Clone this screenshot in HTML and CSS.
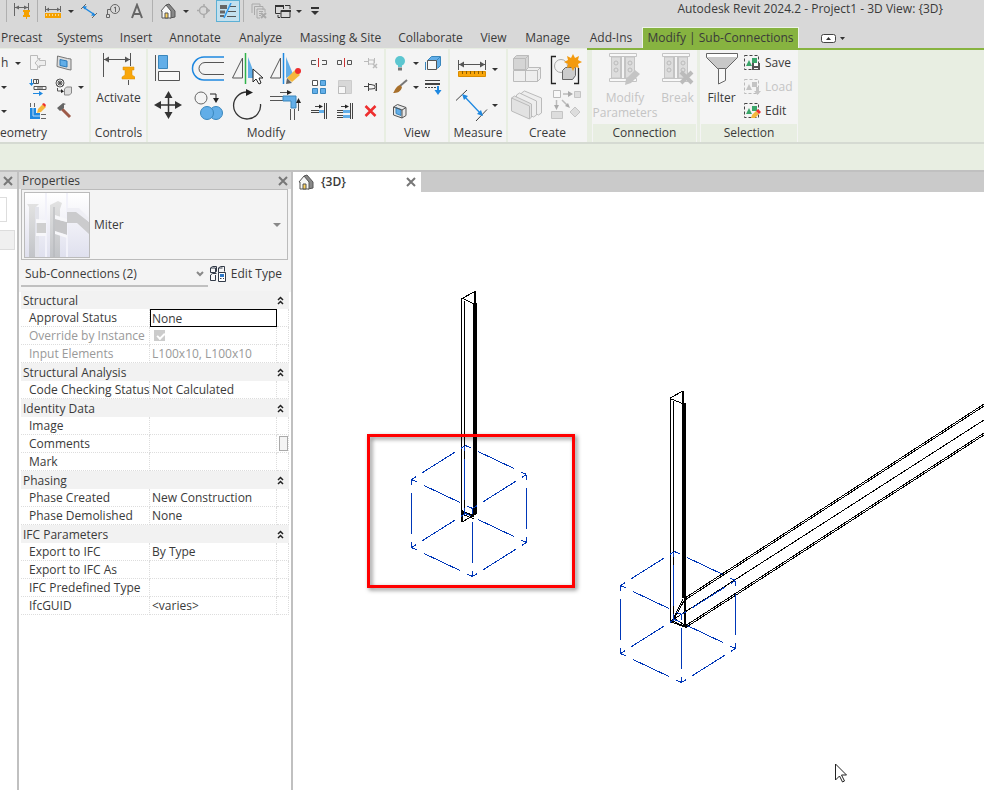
FILE: index.html
```html
<!doctype html>
<html lang="en-US">
    <head>
        <meta charset="utf-8"/>
        <title>Autodesk Revit 2024.2 - Project1 - 3D View: {3D}</title>
        <link rel="stylesheet" href="styles.css">
    </head>
    <body>
        <header>
            <div class="titlebar">
                <div class="quick">
                    <span class="sep"></span>
                    <button type="button" aria-label="Activate dimensions">
                        <svg width="16" height="18" viewBox="0 0 16 18"><path d="M.5 1v13M14.5 1v7M1 5.500h13" fill="none" stroke="#666"/><path d="M1 5.500l4-2v4zM14 5.500l-4-2v4z" fill="#666"/><path d="M9 8h7v2h-1v3h1v2H9v-2h1v-3H9zM12 15h1v2h-1z" fill="#f5a100"/></svg>
                    </button>
                    <span class="sep"></span>
                    <button type="button" aria-label="Measure">
                        <svg width="16" height="16" viewBox="0 0 16 16"><path d="M.5 3v6M15.500 3v6M1 6.500h14" fill="none" stroke="#666"/><path d="M1 6.500l3-2v4zM15 6.500l-3-2v4z" fill="#666"/><path d="M0 10h16v5H0z" fill="#f5a100"/><path d="M1.500 11v2M4.500 11v2M7.500 11v2M10.500 11v2M13.500 11v2" stroke="#fbd68c"/></svg>
                    </button>
                    <button type="button" class="drop" aria-label="Measure options"></button>
                    <button type="button" aria-label="Aligned dimension">
                        <svg width="16" height="16" viewBox="0 0 16 16"><path d="M2 4l12 8" stroke="#1e88e0" stroke-width="1.500"/><path d="M0 6l5-5M11 15l5-5" stroke="#666"/><path d="M2 3l4 .5-2.500 3zM14 13l-4-.5 2.500-3z" fill="#1e88e0"/></svg>
                    </button>
                    <button type="button" aria-label="Tag by category">
                        <svg width="16" height="16" viewBox="0 0 16 16"><circle cx="10" cy="6" r="4.500" fill="none" stroke="#666"/><path d="M9 5l1.500-1v5M6 6.500H2.500V11" fill="none" stroke="#666"/><path d="M1.500 11.500h3v3h-3z" fill="#ddd" stroke="#666"/></svg>
                    </button>
                    <button type="button" aria-label="Text">
                        <svg width="14" height="16" viewBox="0 0 14 16"><path d="M2 15L7 2l5 13M4 11h6" fill="none" stroke="#666" stroke-width="2"/></svg>
                    </button>
                    <span class="sep"></span>
                    <button type="button" aria-label="Default 3D view">
                        <svg width="16" height="16" viewBox="0 0 16 16"><path d="M6 2l3-1 6 7v6l-5 1z" fill="#888" stroke="#555"/><path d="M1 8l5-6 5 6v7H2V8z" fill="#f7f7f7" stroke="#555"/><path d="M5 10h3v5H5z" fill="#ffd35c" stroke="#555"/></svg>
                    </button>
                    <button type="button" class="drop" aria-label="3D view options"></button>
                    <button type="button" aria-label="Section">
                        <svg width="14" height="16" viewBox="0 0 14 16"><circle cx="6.500" cy="7.500" r="4" fill="none" stroke="#aaa" stroke-width="1.500"/><path d="M0 7.500h3M7 1v2M7 12v3M10 7.500h3" fill="none" stroke="#aaa" stroke-width="1.500"/><path d="M9 4l4 3.500L9 11z" fill="#aaa"/></svg>
                    </button>
                    <button type="button" class="on" aria-label="Thin lines">
                        <svg width="18" height="16" viewBox="0 0 18 16"><path d="M1 2h7v4H1zM1 7.500h5v3H1zM1 12h4v2H1z" fill="#666"/><path d="M11 3.500h6M9 8.500h8M8 13.500h9" stroke="#555"/><path d="M12 0L5 15" stroke="#2e9bf0" stroke-width="1.500"/></svg>
                    </button>
                    <span class="sep"></span>
                    <button type="button" aria-label="Close inactive views">
                        <svg width="17" height="16" viewBox="0 0 17 16"><path d="M1 10V1h8v3M3.500 12V3.500H12V7M9 15H6V6h8v3M8 8.500h4M8 10.500h2M8 12.500h2" fill="none" stroke="#aaa"/><path d="M10 10l5 5M15 10l-5 5" stroke="#aaa" stroke-width="2"/></svg>
                    </button>
                    <button type="button" aria-label="Switch windows">
                        <svg width="17" height="15" viewBox="0 0 17 15"><path d="M.5 6V2.500h8V5M.5 5v4.500h5M6 6.500h9v7H6z" fill="none" stroke="#333"/><path d="M0 1h9v2H0zM6 6h10v2H6z" fill="#333"/><path d="M10 1.500h5V5M3 11v2.500h2" fill="none" stroke="#333"/></svg>
                    </button>
                    <button type="button" class="drop last" aria-label="Window list"></button>
                    <button type="button" class="more" aria-label="Customize toolbar">
                        <svg width="10" height="8" viewBox="0 0 10 8"><path d="M1 1h8" stroke="#333" stroke-width="2"/><path d="M1 4h8L5 8z" fill="#333"/></svg>
                    </button>
                </div>
                <div class="title">Autodesk Revit 2024.2 - Project1 - 3D View: {3D}</div>
            </div>
            <nav class="tabs">
                <a href="#">Precast</a>
                <a href="#">Systems</a>
                <a href="#">Insert</a>
                <a href="#">Annotate</a>
                <a href="#">Analyze</a>
                <a href="#">Massing &amp; Site</a>
                <a href="#">Collaborate</a>
                <a href="#">View</a>
                <a href="#">Manage</a>
                <a href="#">Add-Ins</a>
                <a href="#" class="current">Modify | Sub-Connections</a>
                <button type="button" aria-label="Minimize ribbon">
                    <svg width="24" height="9" viewBox="0 0 24 9"><rect x=".5" y=".5" width="14" height="8" rx="2" fill="#fff" stroke="#444"/><path d="M5 6l2.500-3L10 6zM19 3h5l-2.500 3z" fill="#333"/></svg>
                </button>
            </nav>
        </header>

        <div class="ribbon">
            <section class="panel geometry">
                <div class="tools">
                    <button type="button" class="clip">h<i class="caret"></i></button>
                    <button type="button" aria-label="Cope">
                        <svg width="18" height="18" viewBox="0 0 18 18"><path d="M1.500 1.500h7v3h3M1.500 1.500v14h7v-3h3" fill="#f4f4f4" stroke="#bbb"/><path d="M16.500 6.500h-6V4L6 9l4.500 5v-2.500h6z" fill="#eee" stroke="#bbb"/></svg>
                    </button>
                    <button type="button" aria-label="Cut">
                        <svg width="16" height="16" viewBox="0 0 16 16"><path d="M1.500 1l10 2.500L15 4v11l-3-.5L1 11.500z" fill="#ddd" stroke="#777"/><path d="M4 4.500l7 1.500v6l-7-1.500z" fill="#62aee8" stroke="#2b7ab8"/></svg>
                    </button>
                    <span></span>
                    <button type="button" class="clip near" aria-label="Cut options"><i class="caret"></i></button>
                    <button type="button" aria-label="Join">
                        <svg width="18" height="18" viewBox="0 0 18 18"><path d="M4.500 1.500h5v4h-5zM7.500 1v5M5 8.500h12v3H5zM8 10h6" fill="none" stroke="#555"/><path d="M0 5h5L2.500 8zM10 13l4 2.500-4 2.500z" fill="#1e88e0"/><path d="M2.500 1v5M4 15.500h7" stroke="#1e88e0"/></svg>
                    </button>
                    <button type="button" aria-label="Split face">
                        <svg width="18" height="18" viewBox="0 0 18 18"><circle cx="5" cy="5" r="4" fill="none" stroke="#555"/><circle cx="5" cy="5" r="2" fill="none" stroke="#555"/><path d="M2 2l6 6M8 2L2 8M2.500 10v3H7" stroke="#555" fill="none"/><path d="M6 11l3 2.500L6 15z" fill="#222"/><path d="M9.500 11l2-2h5v6l-2 2h-5z" fill="#ddd" stroke="#888"/></svg>
                    </button>
                    <button type="button" class="drop" aria-label="Join options"></button>
                    <button type="button" class="clip near" aria-label="Wall options"><i class="caret"></i></button>
                    <button type="button" aria-label="Wall joins">
                        <svg width="18" height="18" viewBox="0 0 18 18"><path d="M1 6h6v5h4v6H1z" fill="#1e88e0"/><path d="M4 6v8h7" stroke="#bcdcf5" fill="none"/><path d="M1.500 1v4M5.500 1v4M12 12.500h5M12 16.500h5" stroke="#666"/><path d="M8 11l1-4 5-5 3 3-5 5z" fill="#f5b83d"/><path d="M13 2l2-1 2 2-1 2z" fill="#ee2e2e"/></svg>
                    </button>
                    <button type="button" aria-label="Demolish">
                        <svg width="16" height="16" viewBox="0 0 16 16"><path d="M6 6l8 8" stroke="#9d5a48" stroke-width="3"/><path d="M1 5l6-5 3 1-2 1v3L4 8z" fill="#666"/></svg>
                    </button>
                    <span></span>
                </div>
                <h2>eometry</h2>
            </section>

            <section class="panel controls">
                <div class="tools">
                    <button type="button" class="big">
                        <svg width="32" height="34" viewBox="0 0 32 34"><path d="M.5 1v24M27.500 1v13M25.500 28v5M1 7.500h26" fill="none" stroke="#555"/><path d="M1 7.500l5-3v6zM27 7.500l-5-3v6z" fill="#555"/><path d="M20 15h11v3h-2v5l3 2v2H19v-2l3-2v-5h-2z" fill="#f9a60a" stroke="#d98c00" stroke-width=".5"/></svg>
                        Activate
                    </button>
                </div>
                <h2>Controls</h2>
            </section>

            <section class="panel modify">
                <div class="tools">
                    <div class="large">
                        <button type="button" aria-label="Align">
                            <svg width="32" height="32" viewBox="0 0 32 32"><path d="M3.500 2v26" stroke="#555"/><path d="M6.500 2.500h9v13h-9z" fill="#62aee8" stroke="#3a87bd"/><path d="M6.500 18.500h21v9h-21z" fill="#f8f8f8" stroke="#555"/></svg>
                        </button>
                        <button type="button" aria-label="Offset">
                            <svg width="34" height="32" viewBox="0 0 34 32"><path d="M33 4H13a11.500 11.500 0 0 0 0 23h20" fill="none" stroke="#1e88e0" stroke-width="1.500"/><path d="M33 9.500H14a6 6 0 0 0 0 12h19" fill="none" stroke="#555"/></svg>
                        </button>
                        <button type="button" aria-label="Mirror by picking axis">
                            <svg width="34" height="32" viewBox="0 0 34 32"><path d="M12.500 5v20H2.500z" fill="none" stroke="#555"/><path d="M15.500 0v31" stroke="#2fb34a" stroke-width="1.500"/><path d="M18 4l8 21h-8z" fill="#62aee8"/><path d="M23 16v13l3-3 3 5 2-1-2-5h4z" fill="#fff" stroke="#222"/></svg>
                        </button>
                        <button type="button" aria-label="Mirror by drawing axis">
                            <svg width="34" height="32" viewBox="0 0 34 32"><path d="M12.500 5v20H2.500z" fill="none" stroke="#555"/><path d="M15.500 0v31" stroke="#1e88e0" stroke-width="1.500"/><path d="M18 4l7 17-7 4z" fill="#62aee8"/><path d="M19 25l8-8 5 5-8 7z" fill="#f5b83d"/><path d="M19 25l5 5-6 1z" fill="#666"/><circle cx="30" cy="18" r="3" fill="#ee2e2e"/></svg>
                        </button>
                        <button type="button" aria-label="Move">
                            <svg width="32" height="32" viewBox="0 0 32 32"><path d="M16.500 6v20M6 16h20" stroke="#333" stroke-width="1.500"/><path d="M16.500 2l4 7h-8zM16.500 30l4-7h-8zM2 16l7-4v8zM30 16l-7-4v8z" fill="#333"/></svg>
                        </button>
                        <button type="button" aria-label="Copy">
                            <svg width="34" height="32" viewBox="0 0 34 32"><circle cx="10" cy="9" r="6" fill="none" stroke="#666"/><path d="M19 5h6v6" fill="none" stroke="#222"/><path d="M22 9h6l-3 5z" fill="#222"/><circle cx="25" cy="24" r="6.500" fill="#62aee8" stroke="#3a87bd"/><circle cx="16" cy="24" r="6.500" fill="#62aee8" stroke="#3a87bd"/></svg>
                        </button>
                        <button type="button" aria-label="Rotate">
                            <svg width="34" height="32" viewBox="0 0 34 32"><path d="M17 3A13.500 13.500 0 1 0 30.500 15" fill="none" stroke="#333" stroke-width="1.300"/><path d="M16 0l7 3.500-7 3.500z" fill="#222"/></svg>
                        </button>
                        <button type="button" aria-label="Trim to corner">
                            <svg width="34" height="32" viewBox="0 0 34 32"><path d="M2 7.500h13M2 11.500h13M22.500 20v11M26.500 20v11M12 3.500h9M30.500 11v11" stroke="#555"/><path d="M15 7h13v12h-5v-7h-8z" fill="#62aee8" stroke="#3a87bd"/><path d="M19 1l5 2.500L19 6zM28 14l2.500-5 2.500 5z" fill="#222"/></svg>
                        </button>
                    </div>
                    <div class="small">
                        <button type="button" aria-label="Split element">
                            <svg width="16" height="16" viewBox="0 0 16 16"><path d="M5 5.500H.5v4H5M11 5.500h4.500v4H11" fill="none" stroke="#555"/><path d="M7.500 3v9" stroke="#c33"/></svg>
                        </button>
                        <button type="button" aria-label="Split with gap">
                            <svg width="16" height="16" viewBox="0 0 16 16"><path d="M.5 5.500h4v4h-4zM10.500 5.500h4v4h-4z" fill="none" stroke="#555"/><path d="M7.500 3v9" stroke="#c33"/></svg>
                        </button>
                        <button type="button" aria-label="Unpin">
                            <svg width="16" height="16" viewBox="0 0 16 16"><path d="M1 6.500h4M5.500 3v7M6 5h5v4H6M11.500 3v5" fill="none" stroke="#bbb"/><path d="M10 9l4 4M14 9l-4 4" stroke="#bbb" stroke-width="1.500"/></svg>
                        </button>
                        <button type="button" aria-label="Array">
                            <svg width="16" height="16" viewBox="0 0 16 16"><path d="M1.500 1.500h5v5h-5z" fill="#fff" stroke="#555"/><path d="M9.500 1.500h5v5h-5zM1.500 9.500h5v5h-5zM9.500 9.500h5v5h-5z" fill="#62aee8" stroke="#3a87bd"/></svg>
                        </button>
                        <button type="button" aria-label="Scale">
                            <svg width="16" height="16" viewBox="0 0 16 16"><path d="M1.500 1.500h13v13h-13z" fill="#d8d8d8" stroke="#ccc"/><path d="M1.500 7.500h7v7h-7z" fill="#f7f7f7" stroke="#bbb"/></svg>
                        </button>
                        <button type="button" aria-label="Pin">
                            <svg width="16" height="16" viewBox="0 0 16 16"><path d="M1 7.500h4M5.500 4v8M6 5.500h2l4 1v3l-4 .5H6M13.500 4v8M12 5h2M12 11h2" fill="none" stroke="#444"/></svg>
                        </button>
                        <button type="button" aria-label="Trim single">
                            <svg width="16" height="16" viewBox="0 0 16 16"><path d="M13.500 0v16M15.500 0v16M0 7.500h8M0 9.500h8M4 3.500h5" stroke="#444"/><path d="M8 7h5v3H8z" fill="#62aee8"/><path d="M8 1.500l4 2-4 2z" fill="#222"/></svg>
                        </button>
                        <button type="button" aria-label="Trim multiple">
                            <svg width="16" height="16" viewBox="0 0 16 16"><path d="M13.500 0v16M15.500 0v16M0 7.500h6M0 9.500h6M0 12.500h6M0 14.500h6M4 3.500h5" stroke="#444"/><path d="M6 7h7v3H6zM6 12h7v3H6z" fill="#62aee8"/><path d="M8 1.500l4 2-4 2z" fill="#222"/></svg>
                        </button>
                        <button type="button" aria-label="Delete">
                            <svg width="16" height="16" viewBox="0 0 16 16"><path d="M2.500 3l10 10M12.500 3l-10 10" stroke="#ee2e2e" stroke-width="2.500"/></svg>
                        </button>
                    </div>
                </div>
                <h2>Modify</h2>
            </section>

            <section class="panel view">
                <div class="tools">
                    <button type="button" aria-label="Hide in view">
                        <svg width="16" height="16" viewBox="0 0 16 16"><circle cx="8" cy="6" r="5" fill="#5cc6d0"/><path d="M6 9h4v3H6z" fill="#5cc6d0"/><path d="M6 12.500h4v3H6z" fill="#777"/></svg>
                    </button>
                    <button type="button" class="drop" aria-label="Hide options"></button>
                    <button type="button" aria-label="Selection box">
                        <svg width="18" height="16" viewBox="0 0 18 16"><path d="M3.500 5.500l4-4h9v9l-3 3" fill="#62aee8" stroke="#3a87bd"/><path d="M3.500 5.500h9v9h-9z" fill="#f8f8f8" stroke="#555"/><path d="M13 5l3-3M1.500 7v8" stroke="#3a87bd"/></svg>
                    </button>
                    <button type="button" aria-label="Override graphics">
                        <svg width="16" height="16" viewBox="0 0 16 16"><path d="M15 1L8 7" stroke="#777" stroke-width="2"/><path d="M8 6l2 2c-1 5-5 6-9 6 2-2 2-6 7-8z" fill="#a8702c"/></svg>
                    </button>
                    <button type="button" class="drop" aria-label="Override options"></button>
                    <button type="button" aria-label="Linework">
                        <svg width="18" height="16" viewBox="0 0 18 16"><path d="M1 1.500h15" stroke="#444"/><path d="M1 5h15" stroke="#444" stroke-width="2"/><path d="M1 8.500h11" stroke="#444" stroke-dasharray="2 1"/><path d="M14 7v6" stroke="#1e88e0" stroke-width="2"/><path d="M10.500 11h7L14 16z" fill="#1e88e0"/></svg>
                    </button>
                    <button type="button" aria-label="Displace elements">
                        <svg width="16" height="16" viewBox="0 0 16 16"><path d="M1.500 4l4-2.500L14 4.500v8l-4 2.500-8.500-3z" fill="#e8e8e8" stroke="#555"/><path d="M4 4.500l5 2v6l-5-2z" fill="#62aee8" stroke="#3a87bd"/><path d="M1.500 4l8.500 3 4-2.500M10 7v8" fill="none" stroke="#555"/></svg>
                    </button>
                </div>
                <h2>View</h2>
            </section>

            <section class="panel measure">
                <div class="tools">
                    <button type="button" aria-label="Measure between references">
                        <svg width="34" height="32" viewBox="0 0 34 32"><path d="M3.500 7v10M30.500 7v10M4 11.500h26" stroke="#555"/><path d="M4 11.500l5-3v6zM30 11.500l-5-3v6z" fill="#555"/><path d="M3.500 18.500h27v5h-27z" fill="#f9a60a" stroke="#d98c00"/><path d="M7.500 18v3M11.500 18v3M15.500 18v3M19.500 18v3M23.500 18v3M27.500 18v3" stroke="#8a5c00"/></svg>
                    </button>
                    <button type="button" class="drop" aria-label="Measure menu"></button>
                    <button type="button" aria-label="Aligned dimension">
                        <svg width="34" height="32" viewBox="0 0 34 32"><path d="M1 11.500L12 1M21 32l11-11.500" stroke="#444"/><path d="M9 7l17 18" stroke="#1e88e0" stroke-width="1.300"/><path d="M7 5l6 2-4 4zM28 27l-6-2 4-4z" fill="#1e88e0"/></svg>
                    </button>
                    <button type="button" class="drop" aria-label="Dimension menu"></button>
                </div>
                <h2>Measure</h2>
            </section>

            <section class="panel create">
                <div class="tools">
                    <button type="button" aria-label="Create parts">
                        <svg width="32" height="32" viewBox="0 0 32 32"><path d="M2.500 5.500l3-3h12v12l-2 2h-13z" fill="#d5d5d5" stroke="#bbb"/><path d="M2.500 17.500h12v11h-12zM14.500 17.500l3-3h12v11l-3 3h-12z" fill="#eee" stroke="#bbb"/><path d="M2.500 5.500h12v12M14.500 5.500l3-3M14.500 17.500h12v11M26.500 17.500l3-3" fill="none" stroke="#bbb"/></svg>
                    </button>
                    <button type="button" aria-label="Create group">
                        <svg width="34" height="32" viewBox="0 0 34 32"><path d="M8 3.500H3.500v27H8M26 30.500h4.500V15" fill="none" stroke="#222" stroke-width="1.300"/><circle cx="13" cy="13" r="6.500" fill="#f4f4f4" stroke="#aaa"/><path d="M14.500 17.500l3-3h10v8l-3 4h-10z" fill="#ccc" stroke="#666"/><path d="M25 1l2 4 4-2-1 4 4 2-4 2 1 4-4-1-2 4-2-4-4 1 1-4-4-2 4-2-1-4 4 2z" fill="#f39a0e"/></svg>
                    </button>
                    <button type="button" aria-label="Create assembly">
                        <svg width="34" height="32" viewBox="0 0 34 32"><path d="M11.500 4l3-2 17 7v15l-3 2-17-9z" fill="#eee" stroke="#bbb"/><path d="M6.500 6l3-2 17 8v14l-3 2-17-9z" fill="#eee" stroke="#bbb"/><path d="M1.500 9l3-2 17 8v13l-2 2-18-8z" fill="#e2e2e2" stroke="#bbb"/><path d="M1.500 9l18 8v13" fill="none" stroke="#bbb"/></svg>
                    </button>
                    <button type="button" aria-label="Create similar">
                        <svg width="34" height="32" viewBox="0 0 34 32"><path d="M5.500 1.500h7v7h-7z" fill="#f8f8f8" stroke="#bbb"/><path d="M26.500 2.500h6v6h-6zM3.500 22.500h11v7h-11zM27 18l5 5-5 5-5-5z" fill="#ddd" stroke="#c4c4c4"/><path d="M15 5h6M8.500 11v6M14 11l6 6" stroke="#bbb" stroke-width="1.500"/><path d="M20 2l5 3-5 3zM6 16h5l-2.500 5zM22 19l-5-2 3-3z" fill="#aaa"/></svg>
                    </button>
                </div>
                <h2>Create</h2>
            </section>

            <div class="contextual">
                <section class="panel connection">
                    <div class="tools">
                        <button type="button" class="big" disabled>
                            <svg width="34" height="34" viewBox="0 0 34 34"><path d="M1.500 1.500h27v3h-27zM1.500 26.500h27v3h-27z" fill="#f8f8f8" stroke="#c4c4c4"/><path d="M3.500 5h9v21h-9zM17.500 5h9v21h-9z" fill="#ddd" stroke="#c4c4c4"/><path d="M13 5v21M17 5v21" stroke="#c4c4c4" stroke-width="2"/><g fill="none" stroke="#bbb"><circle cx="8" cy="11" r="2"/><circle cx="8" cy="18" r="2"/><circle cx="22" cy="11" r="2"/><circle cx="22" cy="18" r="2"/></g><path d="M18 27l9-9 5 4-9 9-6 2z" fill="#c4c4c4"/></svg>
                            Modify<br>Parameters
                        </button>
                        <button type="button" class="big" disabled>
                            <svg width="34" height="34" viewBox="0 0 34 34"><path d="M1.500 1.500h27v3h-27zM1.500 26.500h27v3h-27z" fill="#f8f8f8" stroke="#c4c4c4"/><path d="M3.500 5h9v21h-9zM17.500 5h9v21h-9z" fill="#ddd" stroke="#c4c4c4"/><path d="M13 5v21M17 5v21" stroke="#c4c4c4" stroke-width="2"/><g fill="none" stroke="#bbb"><circle cx="8" cy="11" r="2"/><circle cx="8" cy="18" r="2"/><circle cx="22" cy="11" r="2"/><circle cx="22" cy="18" r="2"/></g><path d="M20 20l11 11M31 20L20 31" stroke="#bbb" stroke-width="4"/></svg>
                            Break
                        </button>
                    </div>
                    <h2>Connection</h2>
                </section>
                <section class="panel selection">
                    <div class="tools">
                        <button type="button" class="big">
                            <svg width="34" height="34" viewBox="0 0 34 34"><path d="M1.500 1.500h31v4L20 18H14L1.500 5.500z" fill="#c8c8c8" stroke="#666"/><path d="M2 2h30v3H2z" fill="#fff"/><path d="M13.500 16.500h7v12l-7 3.500z" fill="#f8f8f8" stroke="#666"/></svg>
                            Filter
                        </button>
                        <div class="list">
                            <button type="button">
                                <svg width="18" height="18" viewBox="0 0 18 18"><path d="M1.500 1.500h14v14h-14z" fill="none" stroke="#444" stroke-dasharray="3 2"/><path d="M3 12l3-6 3 6zM9 4h5v5H9z" fill="#3aa66a"/><path d="M9 9h8v7H9z" fill="#555"/><path d="M11 9h4v3h-4zM11 14h4v1h-4z" fill="#fff"/></svg>
                                Save
                            </button>
                            <button type="button" disabled>
                                <svg width="18" height="18" viewBox="0 0 18 18"><path d="M1.500 1.500h14v14h-14z" fill="none" stroke="#bbb" stroke-dasharray="3 2"/><path d="M3 12l3-6 3 6zM9 4h5v5H9zM13 9h3v4h2l-3.500 4-3.500-4h2z" fill="#c4c4c4"/></svg>
                                Load
                            </button>
                            <button type="button">
                                <svg width="18" height="18" viewBox="0 0 18 18"><path d="M1.500 1.500h14v14h-14z" fill="none" stroke="#444" stroke-dasharray="3 2"/><path d="M3 12l3-6 3 6zM9 4h5v5H9z" fill="#3aa66a"/><path d="M8 16l1-3 4-4 3 3-4 4z" fill="#f5b83d"/><path d="M13 9l2-2 3 3-2 2z" fill="#ee2e2e"/></svg>
                                Edit
                            </button>
                        </div>
                    </div>
                    <h2>Selection</h2>
                </section>
            </div>
        </div>
        <div class="options"></div>

        <main>
            <aside class="browser">
                <div class="bar">
                    <button type="button" class="close" aria-label="Close browser"><svg width="10" height="10" viewBox="0 0 10 10"><path d="M1 1l8 8M9 1L1 9"/></svg></button>
                </div>
                <div class="search"></div>
                <div class="root"></div>
            </aside>

            <aside class="properties">
                <div class="bar">
                    Properties
                    <button type="button" class="close" aria-label="Close properties"><svg width="10" height="10" viewBox="0 0 10 10"><path d="M1 1l8 8M9 1L1 9"/></svg></button>
                </div>
                <button type="button" class="type">
                    <svg class="thumb" width="64" height="64" viewBox="0 0 64 64">
                        <defs>
                            <linearGradient id="sky" x2="0" y2="1"><stop offset="0" stop-color="#fff"/><stop offset="1" stop-color="#dfe0ee"/></linearGradient>
                            <linearGradient id="steel" x2="0" y2="1"><stop offset="0" stop-color="#e2e2e2"/><stop offset="1" stop-color="#c2c4c8"/></linearGradient>
                        </defs>
                        <path d="M0 0h64v64H0z" fill="url(#sky)"/>
                        <path d="M21 0v64M42 0v64" stroke="#f2f2fa" stroke-width="2"/>
                        <path d="M2 11h12l-4 4v49H4V14z" fill="url(#steel)"/>
                        <path d="M10 14h4v50h-4z" fill="#e2e3ea"/>
                        <path d="M12 30h9v10h-9z" fill="#cfcfcf"/>
                        <path d="M11 26l10 1v3H11zM11 40h10v3H11z" fill="#f7f7fa"/>
                        <path d="M25 12l8-4 4 2-2 6v48H25z" fill="url(#steel)"/>
                        <path d="M29 14v50" stroke="#b2b4b8"/>
                        <path d="M30 26l12 3v13l-12-4z" fill="#c6c6c8"/>
                        <path d="M30 22l12 4v3l-12-3zM30 38l12 4v3l-12-4z" fill="#f7f7fa"/>
                        <path d="M42 17h9l13 12v12L52 30H42z" fill="#cbcbcd"/>
                        <path d="M42 15h12l10 10v4L51 19h-9z" fill="#efeff5"/>
                    </svg>
                    <span>Miter</span>
                    <i class="caret"></i>
                </button>
                <div class="filter">
                    <div class="pick">
                        <select aria-label="Selected category"><option>Sub-Connections (2)</option></select>
                        <svg width="8" height="6" viewBox="0 0 8 6"><path d="M1 1l3 3 3-3" fill="none" stroke="#888" stroke-width="2"/></svg>
                    </div>
                    <button type="button">
                        <svg width="18" height="18" viewBox="0 0 18 18"><path d="M1.500 3l2-1.500h4v5l-1 1h-5zM9.500 3l2-1.500h4v5M9.500 3v4.500h2M1.500 10l2-1.500h4M1.500 10v5.500h5V10M1.500 3h5v4M9.500 3h4" fill="#f8f8f8" stroke="#333b48"/><path d="M9.500 7.500h7v9h-7z" fill="#fff" stroke="#333b48"/><path d="M11 9h4v3h-4z" fill="#2d78c8"/><path d="M11 13.500h1.500M14 13.500h1" stroke="#333b48"/></svg>
                        Edit Type
                    </button>
                </div>
                <table>
                    <colgroup><col class="name"><col><col class="extra"></colgroup>
                    <tbody>
                        <tr class="group"><th colspan="2">Structural</th><td><svg width="7" height="9" viewBox="0 0 7 9"><path d="M1 4l2.500-2.500L6 4M1 8l2.500-2.500L6 8"/></svg></td></tr>
                        <tr><th><label for="approval">Approval Status</label></th><td class="editing"><input type="text" id="approval" value="None"/></td><td></td></tr>
                        <tr class="off"><th><label for="override">Override by Instance</label></th><td><input type="checkbox" id="override" checked disabled/></td><td></td></tr>
                        <tr class="off"><th>Input Elements</th><td>L100x10, L100x10</td><td></td></tr>
                        <tr class="group"><th colspan="2">Structural Analysis</th><td><svg width="7" height="9" viewBox="0 0 7 9"><path d="M1 4l2.500-2.500L6 4M1 8l2.500-2.500L6 8"/></svg></td></tr>
                        <tr><th>Code Checking Status</th><td>Not Calculated</td><td></td></tr>
                        <tr class="group"><th colspan="2">Identity Data</th><td><svg width="7" height="9" viewBox="0 0 7 9"><path d="M1 4l2.500-2.500L6 4M1 8l2.500-2.500L6 8"/></svg></td></tr>
                        <tr><th>Image</th><td></td><td></td></tr>
                        <tr><th>Comments</th><td></td><td><button type="button" class="associate" aria-label="Associate parameter"></button></td></tr>
                        <tr><th>Mark</th><td></td><td></td></tr>
                        <tr class="group"><th colspan="2">Phasing</th><td><svg width="7" height="9" viewBox="0 0 7 9"><path d="M1 4l2.500-2.500L6 4M1 8l2.500-2.500L6 8"/></svg></td></tr>
                        <tr><th>Phase Created</th><td>New Construction</td><td></td></tr>
                        <tr><th>Phase Demolished</th><td>None</td><td></td></tr>
                        <tr class="group"><th colspan="2">IFC Parameters</th><td><svg width="7" height="9" viewBox="0 0 7 9"><path d="M1 4l2.500-2.500L6 4M1 8l2.500-2.500L6 8"/></svg></td></tr>
                        <tr><th>Export to IFC</th><td>By Type</td><td></td></tr>
                        <tr><th>Export to IFC As</th><td></td><td></td></tr>
                        <tr><th>IFC Predefined Type</th><td></td><td></td></tr>
                        <tr><th>IfcGUID</th><td>&lt;varies&gt;</td><td></td></tr>
                    </tbody>
                </table>
            </aside>

            <section class="drawing">
                <div class="views">
                    <div class="viewtab">
                        <svg width="16" height="16" viewBox="0 0 16 16"><path d="M6 2l3-1 6 7v6l-5 1z" fill="#888" stroke="#555"/><path d="M1 8l5-6 5 6v7H2V8z" fill="#f7f7f7" stroke="#555"/><path d="M5 10h3v5H5z" fill="#ffd35c" stroke="#555"/></svg>
                        <span>{3D}</span>
                        <button type="button" class="close" aria-label="Close view"><svg width="10" height="10" viewBox="0 0 10 10"><path d="M1 1l8 8M9 1L1 9"/></svg></button>
                    </div>
                </div>
                <svg class="canvas">
                    <defs>
                        <g id="box" fill="none" stroke="#0037b8" stroke-dasharray="8 12 60 12 8">
                            <path pathLength="100" d="M54 1L0 35"/>
                            <path pathLength="100" d="M54 1L115 30"/>
                            <path pathLength="100" d="M0 35L61 64"/>
                            <path pathLength="100" d="M115 30L61 64"/>
                            <path pathLength="100" d="M0 35V103"/>
                            <path pathLength="100" d="M115 30V98"/>
                            <path pathLength="100" d="M61 64V132"/>
                            <path pathLength="100" d="M53 1V69"/>
                            <path pathLength="100" d="M0 103L61 132"/>
                            <path pathLength="100" d="M115 98L61 132"/>
                            <path pathLength="100" d="M0 103L54 69"/>
                            <path pathLength="100" d="M115 98L54 69"/>
                        </g>
                    </defs>
                    <g shape-rendering="crispEdges">
                        <!-- free column -->
                        <path d="M168.500 106V330M171.500 109V321M181.500 99V112M168 107l13-7M169 106l12 6M169 322l12 5M169 330l12-7" fill="none" stroke="#000"/>
                        <path d="M180 111h4v211l-4 2z"/>
                        <path d="M168 318h2v12h-2zM181 99h2v13h-2z"/>
                        <path d="M169 320l12 4" stroke="#000" stroke-width="2"/>
                        <use href="#box" x="118.500" y="252.500"/>

                        <!-- column with mitered beam -->
                        <path d="M377.500 206V429M380.500 209V427M390.500 199V211M377 206l13-7M378 207l13 5" fill="none" stroke="#000"/>
                        <path d="M389 211h4v195h-4zM389 199h2v12h-2zM391 406h2v29h-2z"/>
                        <path d="M392 406L691 212M392 408L691 214M392 434L691 241M392 436L691 243" stroke="#000" fill="none"/>
                        <path d="M381 427L691 228M390 407L379 429M392 407L381 427M377 428l14 6M378 430l14 5M380 426l12 7" fill="none" stroke="#000"/>
                        <use href="#box" x="327.500" y="358.500"/>
                    </g>
                    <rect class="marker" x="75.500" y="243.500" width="205" height="151"/>
                    <path d="M542.500 572v16l4-4 3 6 2-1-3-6h5z" fill="#fff" stroke="#222"/>
                </svg>
            </section>
        </main>
    </body>
</html>
```
FILE: styles.css
```css
* {
    box-sizing: border-box;
}

body {
    margin: 0;
    height: 100vh;
    display: flex;
    flex-direction: column;
    overflow: hidden;
    background-color: #fff;
    color: #3a3a3a;
    font-family: "Open Sans", "Noto Sans", sans-serif;
    font-size: 12px;
    line-height: 16px;
}

button {
    display: flex;
    align-items: center;
    justify-content: center;
    padding: 0;
    border: 0;
    background: none;
    color: inherit;
    font: inherit;
}

button:disabled {
    color: #c4c4c4;
}

svg {
    display: block;
    flex: none;
}

a {
    color: inherit;
    text-decoration: none;
}

.drop::before,
.caret {
    content: "";
    border: 3px solid transparent;
    border-top-color: #333;
    border-bottom: 0;
}

/* title bar and tabs */

header {
    background-color: #d8d8d8;
}

.titlebar {
    display: flex;
    height: 28px;
}

.quick {
    display: flex;
    height: 22px;
    padding-left: 3px;
}

.quick button {
    width: 24px;
}

.quick .drop {
    width: 12px;
}

.quick .last {
    width: 8px;
}

.quick .on {
    background-color: #c3e0ee;
    border: 1px solid #5db0d5;
}

.sep {
    width: 1px;
    margin: 0 3px;
    background-color: #b0b0b0;
}

.title {
    flex: 1;
    padding-right: 41px;
    line-height: 18px;
    text-align: right;
}

.tabs {
    display: grid;
    grid-template-columns: 48px 64px 48px 70px 61px 99px 81px 45px 63px 64px 155px 70px;
    height: 20px;
}

.tabs a {
    display: flex;
    justify-content: center;
    line-height: 20px;
    white-space: nowrap;
}

.tabs a:first-child {
    justify-content: flex-start;
    padding-left: 1px;
}

.tabs .current {
    background-color: #87b340;
    box-shadow: 0 0 0 1px #eef3ea;
}

/* ribbon */

.ribbon {
    display: flex;
    gap: 2px;
    height: 96px;
    background-color: #e8eee2;
    border-bottom: 2px solid #d5dad2;
    position: relative;
}

.panel {
    flex: none;
    display: flex;
    flex-direction: column;
    margin-top: 1px;
    background-color: #f4f4f4;
}

.panel h2 {
    margin: 0;
    height: 18px;
    font-size: 12px;
    font-weight: normal;
    line-height: 18px;
    text-align: center;
}

.tools {
    flex: 1;
    display: flex;
    padding-top: 2px;
}

.geometry {
    width: 89px;
}

.geometry .tools {
    display: grid;
    grid-template-columns: 25px 26px 25px 9px;
    grid-auto-rows: 24px;
}

.geometry h2 {
    text-align: left;
}

.clip {
    justify-content: flex-start;
    gap: 7px;
    padding-left: 1px;
}

.controls {
    width: 55px;
}

.big {
    flex: 1;
    flex-direction: column;
    justify-content: flex-start;
    gap: 4px;
    padding-top: 1px;
    line-height: 15px;
}

.modify {
    width: 236px;
}

.large {
    display: grid;
    grid-template-columns: 40px 39px 39px 38px;
    grid-auto-rows: 36px;
}

.small {
    display: grid;
    grid-template-columns: 26px 26px 26px;
    grid-auto-rows: 24px;
    padding-left: 2px;
}

.view {
    width: 62px;
}

.view .tools {
    display: grid;
    grid-template-columns: 28px 4px 30px;
    grid-auto-rows: 24px;
}

.measure {
    width: 56px;
}

.measure .tools {
    display: grid;
    grid-template-columns: 43px 4px;
    grid-auto-rows: 36px;
}

.create {
    width: 79px;
}

.create .tools {
    display: grid;
    grid-template-columns: 38px 38px;
    grid-auto-rows: 36px;
}

.contextual {
    flex: 1;
    display: flex;
    gap: 3px;
    margin-left: -2px;
    padding-left: 5px;
    border-top: 2px solid #87b340;
}

.contextual .panel {
    margin-top: 0;
}

.contextual .tools {
    padding-top: 1px;
}

.contextual h2 {
    background-color: #e8eee2;
    border: 0 solid #f4f4f4;
    border-width: 0 1px;
}

.connection {
    width: 105px;
}

.connection .big:first-child {
    flex: none;
    width: 66px;
}

.selection {
    width: 98px;
}

.list {
    width: 55px;
}

.list button {
    height: 24px;
    gap: 4px;
}

.options {
    flex: none;
    height: 28px;
    background-color: #e8eee2;
    border-bottom: 2px solid #c0c0c0;
}

/* docked palettes */

main {
    flex: 1;
    display: flex;
    min-height: 0;
}

.bar {
    display: flex;
    align-items: center;
    justify-content: space-between;
    height: 17px;
    padding: 0 3px;
    background-color: #d8d8d8;
}

.close path {
    stroke: #777;
    stroke-width: 2;
}

.browser {
    flex: none;
    width: 19px;
    border-right: 2px solid #c0c0c0;
}

.search {
    width: 7px;
    height: 25px;
    margin-top: 8px;
    border: 1px solid #ddd;
    border-left: 0;
}

.root {
    width: 15px;
    height: 20px;
    margin-top: 8px;
    background-color: #f0f0f0;
    border: 1px solid #ddd;
    border-left: 0;
}

.properties {
    flex: none;
    width: 274px;
    padding-right: 3px;
    border-right: 2px solid #c0c0c0;
    background: linear-gradient(#f4f4f4 120px, #fff 120px);
}

.properties .bar {
    margin-right: -3px;
}

.type {
    width: 267px;
    height: 71px;
    margin: 0 2px;
    padding: 0 6px 0 2px;
    border: 1px solid #bbb;
}

.type span {
    flex: 1;
    padding-left: 4px;
    text-align: left;
}

.type .caret {
    border-width: 4px 4px 0;
    border-top-color: #888;
}

.thumb {
    box-sizing: content-box;
    border: 1px solid #bbb;
}

.filter {
    display: flex;
    justify-content: space-between;
    height: 27px;
    margin: 0 6px 4px 2px;
}

.pick {
    display: flex;
    align-items: center;
    width: 187px;
    padding: 2px 4px 0;
    border-bottom: 2px solid #c0c0c0;
}

.pick select {
    flex: 1;
    appearance: none;
    padding: 0;
    border: 0;
    background: none;
    color: inherit;
    font: inherit;
}

.filter button {
    gap: 4px;
}

table {
    width: 268px;
    margin-left: 2px;
    table-layout: fixed;
    border-spacing: 0;
    background-color: #fff;
}

.name {
    width: 129px;
}

.extra {
    width: 12px;
}

tr {
    height: 18px;
}

th,
td {
    height: 18px;
    padding: 0 0 0 2px;
    border: 0 dotted #ddd;
    border-width: 0 1px 1px 0;
    font-weight: normal;
    line-height: 17px;
    text-align: left;
    white-space: nowrap;
}

th {
    padding-left: 8px;
}

.group th {
    padding-left: 2px;
    border: 0;
    background-color: #f2f2f2;
}

.group td {
    padding-left: 0;
    border: 0;
    background-color: #f2f2f2;
}

.group path {
    fill: none;
    stroke: #222;
    stroke-width: 1.5;
}

.off {
    color: #999;
}

.editing {
    padding: 0;
    border: 0;
}

.editing input {
    display: block;
    width: 100%;
    height: 18px;
    padding: 0 1px;
    border: 1px solid #000;
    color: inherit;
    font: inherit;
}

td input[type="checkbox"] {
    appearance: none;
    display: block;
    width: 11px;
    height: 11px;
    margin: 2px;
    background-color: #ccc;
}

td input[type="checkbox"]::before {
    content: "";
    display: block;
    width: 6px;
    height: 3px;
    margin: 3px 0 0 3px;
    border: solid #fff;
    border-width: 0 0 2px 2px;
    transform: rotate(-45deg);
}

.associate {
    width: 9px;
    height: 15px;
    background-color: #f4f4f4;
    border: 1px solid #aaa;
}

/* drawing area */

.drawing {
    flex: 1;
    display: flex;
    flex-direction: column;
}

.views {
    height: 20px;
    background-color: #cacaca;
}

.viewtab {
    display: flex;
    align-items: center;
    width: 128px;
    height: 20px;
    padding: 0 5px;
    background-color: #fff;
}

.viewtab span {
    flex: 1;
    padding-left: 7px;
    font-weight: 600;
}

.canvas {
    flex: 1;
    width: 100%;
}

.marker {
    fill: none;
    stroke: #f00;
    stroke-width: 3;
    filter: drop-shadow(2px 2px 2px rgba(0, 0, 0, 0.5));
}
```
